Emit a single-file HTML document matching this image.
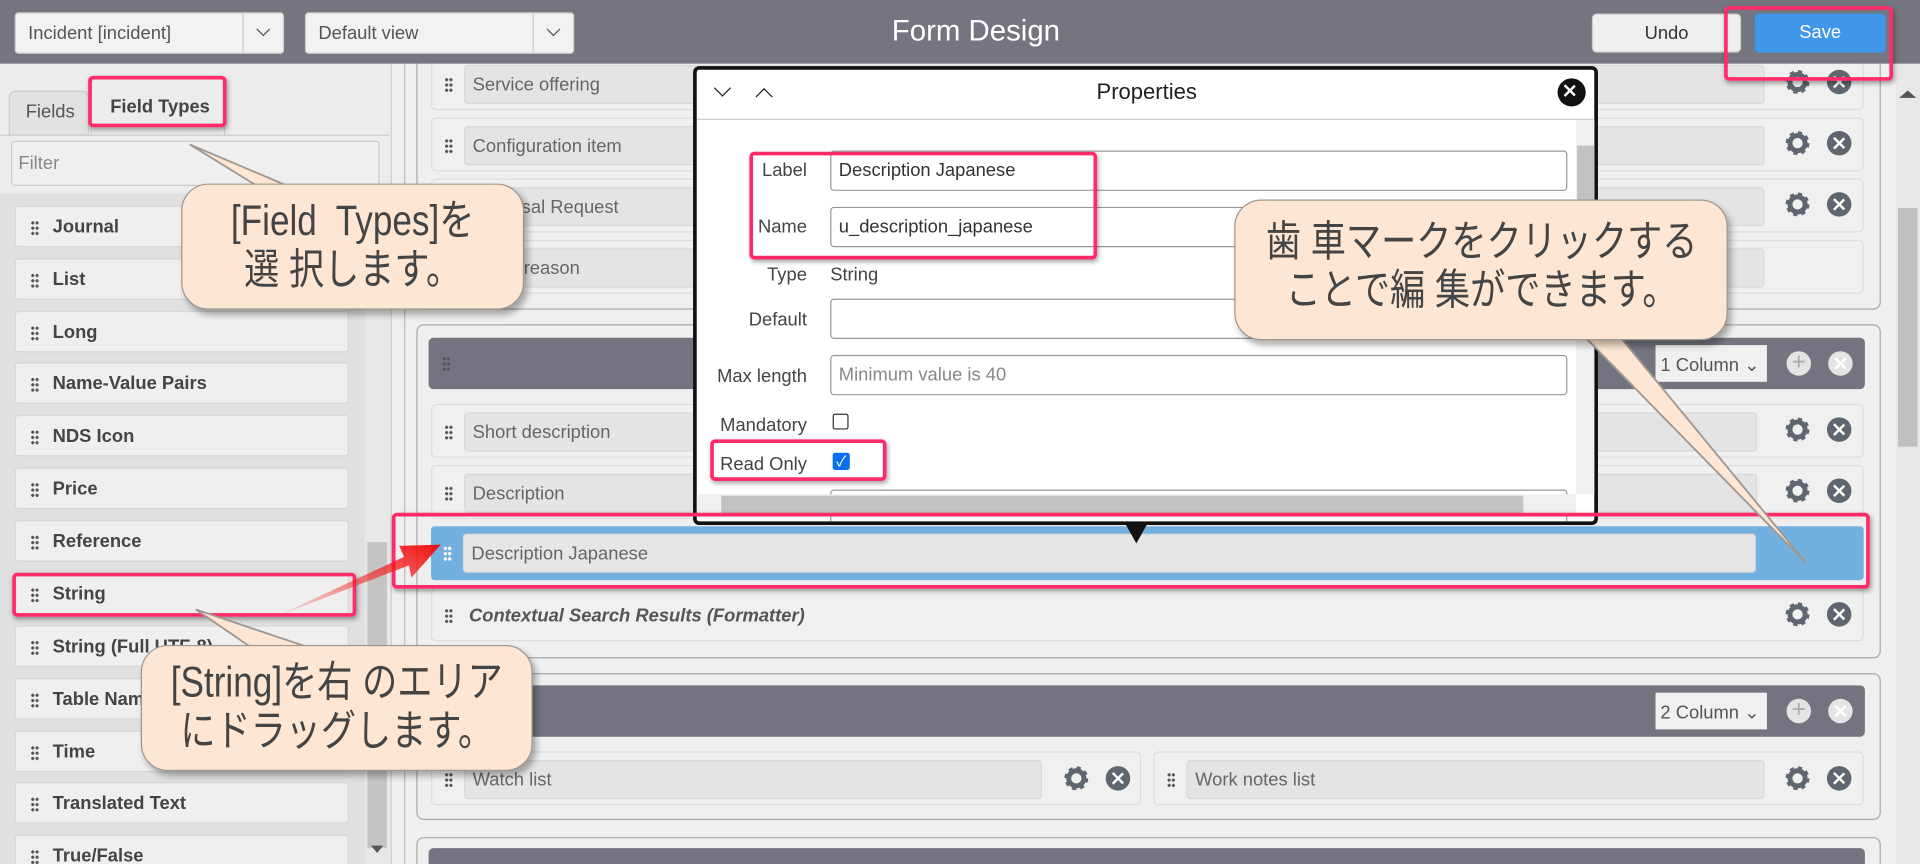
<!DOCTYPE html>
<html><head><meta charset="utf-8"><style>
*{box-sizing:border-box;margin:0;padding:0}
body{width:1920px;height:864px;overflow:hidden;background:#efefef;font-family:"Liberation Sans","Noto Sans CJK JP",sans-serif;color:#333}
#w{position:absolute;left:0;top:0;width:1568px;height:706px;transform:scale(1.22449,1.2238);transform-origin:0 0;overflow:hidden;background:#efefef}
.a{position:absolute}
.hdr{left:0;top:0;width:1568px;height:52px;background:#75757f}
.sel{background:#f2f2f2;border:1px solid #ccc;border-radius:3px;height:34px;font-size:15px;color:#555;padding:8px 10px}
.sel .c{position:absolute;right:0;top:0;width:33px;height:32px;border-left:1px solid #ccc}
.chev{position:absolute;width:8px;height:8px;border-right:1.5px solid #555;border-bottom:1.5px solid #555;transform:rotate(45deg)}
.btn{border-radius:4px;height:32px;font-size:15px;text-align:center;line-height:32px}
.item{left:12px;width:273px;height:34px;background:#efefef;border:1px solid #d6d6d6;border-radius:3px;font-size:15px;font-weight:bold;color:#444;padding:8px 0 0 30px}
.dots{position:absolute;width:7px;height:13px;background:radial-gradient(circle,#555 1.2px,transparent 1.4px) 0 0/3.5px 4.3px}
.row{background:#f0f0f0;border:1px solid #ddd;border-radius:4px;height:44px}
.fld{position:absolute;left:26px;top:6px;height:32px;background:#e4e4e4;border:1px solid #d8d8d8;border-radius:3px;font-size:15px;color:#666;padding:7px 6px}
.sec{border:1px solid #aaa;border-radius:6px;background:#efefef}
.bar{background:#747480;border-radius:4px;height:42px}
.xc{position:absolute;width:20px;height:20px;border-radius:50%;background:#5f6670}
.xc:before,.xc:after{content:"";position:absolute;left:9px;top:4px;width:1.5px;height:12px;background:#fff;transform:rotate(45deg)}
.xc:after{transform:rotate(-45deg)}
.red{position:absolute;border:3px solid #ff2a6a;border-radius:4px;box-shadow:1px 2px 4px rgba(0,0,0,.35)}
.call{position:absolute;background:#fde6d3;border:1.5px solid #a09890;border-radius:22px;box-shadow:3px 4px 5px rgba(0,0,0,.3);font-size:35px;color:#444;text-align:center;line-height:40px;white-space:nowrap}
.call span{position:absolute;left:50%;transform:translateX(-50%) scaleX(0.82);transform-origin:50% 0}
.pl{position:absolute;right:0;width:90px;text-align:right;font-size:15px;color:#444}
.pi{position:absolute;left:109px;width:602px;height:33px;border:1px solid #999;border-radius:3px;font-size:15px;padding:7px 6px;color:#333}
</style></head><body><div id="w">

<div class="a" style="left:0;top:52px;width:320px;height:654px;background:#ececec;border-right:1px solid #ccc"></div>
<div class="a" style="left:0;top:158px;width:298px;height:548px;background:#e0e0e0"></div>
<div class="a" style="left:7px;top:74px;width:66px;height:37px;background:#e2e2e2;border:1px solid #ccc;border-bottom:none;border-radius:6px 6px 0 0;font-size:15px;color:#555;padding:8px 0 0 13px">Fields</div>
<div class="a" style="left:74px;top:63px;width:110px;height:48px;background:#ececec;border:1px solid #ccc;border-bottom:none;border-radius:6px 6px 0 0;font-size:15px;font-weight:bold;color:#444;padding:15px 0 0 15px">Field Types</div>
<div class="a" style="left:0;top:110px;width:318px;height:1px;background:#ccc"></div>
<div class="a" style="left:9px;top:115px;width:301px;height:37px;background:#efefef;border:1px solid #ccc;border-radius:3px;font-size:15px;color:#888;padding:9px 5px">Filter</div>
<div class="a" style="left:298px;top:158px;width:20px;height:548px;background:#e8e8e8"></div>
<div class="a" style="left:300px;top:443px;width:16px;height:250px;background:#c4c4c4"></div>
<div class="a" style="left:303px;top:691px;border:5px solid transparent;border-top:6px solid #555;border-bottom:none"></div>

<div class="a item" style="top:168px"><div class="dots" style="left:12px;top:11px"></div>Journal</div>
<div class="a item" style="top:211px"><div class="dots" style="left:12px;top:11px"></div>List</div>
<div class="a item" style="top:254px"><div class="dots" style="left:12px;top:11px"></div>Long</div>
<div class="a item" style="top:296px"><div class="dots" style="left:12px;top:11px"></div>Name-Value Pairs</div>
<div class="a item" style="top:339px"><div class="dots" style="left:12px;top:11px"></div>NDS Icon</div>
<div class="a item" style="top:382px"><div class="dots" style="left:12px;top:11px"></div>Price</div>
<div class="a item" style="top:425px"><div class="dots" style="left:12px;top:11px"></div>Reference</div>
<div class="a item" style="top:468px"><div class="dots" style="left:12px;top:11px"></div>String</div>
<div class="a item" style="top:511px"><div class="dots" style="left:12px;top:11px"></div>String (Full UTF-8)</div>
<div class="a item" style="top:554px"><div class="dots" style="left:12px;top:11px"></div>Table Name</div>
<div class="a item" style="top:597px"><div class="dots" style="left:12px;top:11px"></div>Time</div>
<div class="a item" style="top:639px"><div class="dots" style="left:12px;top:11px"></div>Translated Text</div>
<div class="a item" style="top:682px"><div class="dots" style="left:12px;top:11px"></div>True/False</div>

<div class="a" style="left:330px;top:52px;width:1px;height:654px;background:#bbb"></div>
<div class="a" style="left:1548px;top:52px;width:20px;height:654px;background:#e8e8e8"></div>
<div class="a" style="left:1550px;top:170px;width:16px;height:195px;background:#c0c0c0"></div>
<div class="a" style="left:1551px;top:74px;border:7px solid transparent;border-bottom:6px solid #555;border-top:none"></div>

<div class="a sec" style="left:340px;top:40px;width:1196px;height:213px"></div>
<div class="a row" style="left:352px;top:46px;width:1170px"><div class="dots" style="left:10px;top:16px"></div><div class="fld" style="width:1062px">Service offering</div></div>
<div class="a row" style="left:352px;top:96px;width:1170px"><div class="dots" style="left:10px;top:16px"></div><div class="fld" style="width:1062px">Configuration item</div></div>
<div class="a row" style="left:352px;top:146px;width:1170px"><div class="dots" style="left:10px;top:16px"></div><div class="fld" style="width:1062px">Proposal Request</div></div>
<div class="a row" style="left:352px;top:196px;width:1170px"><div class="dots" style="left:10px;top:16px"></div><div class="fld" style="width:1062px">Other reason</div></div>

<div class="a sec" style="left:340px;top:265px;width:1196px;height:273px"></div>
<div class="a bar" style="left:350px;top:276px;width:1173px"><div class="dots" style="left:11px;top:15px"></div></div>
<div class="a" style="left:1352px;top:282px;width:91px;height:30px;background:#f0f0f0;font-size:15px;color:#555;padding:7px 4px">1 Column ⌄</div>
<div class="a" style="left:1459px;top:287px;width:20px;height:20px;border-radius:50%;background:#e4e4e4;color:#aaa;text-align:center;font-size:20px;line-height:19px">+</div>
<div class="a xc" style="left:1493px;top:287px;background:#e4e4e4"></div>
<div class="a row" style="left:352px;top:330px;width:1170px"><div class="dots" style="left:10px;top:16px"></div><div class="fld" style="width:1056px">Short description</div></div>
<div class="a row" style="left:352px;top:380px;width:1170px"><div class="dots" style="left:10px;top:16px"></div><div class="fld" style="width:1056px">Description</div></div>
<div class="a" style="left:352px;top:430px;width:1170px;height:44px;background:#72b0e0;border-radius:3px"><div class="dots" style="left:10px;top:16px;background:radial-gradient(circle,#fff 1.3px,transparent 1.5px) 0 0/3.5px 4.3px"></div><div class="fld" style="width:1056px;background:#e6e6e6">Description Japanese</div></div>
<div class="a row" style="left:352px;top:480px;width:1170px"><div class="dots" style="left:10px;top:16px"></div><div style="position:absolute;left:30px;top:14px;font-size:15px;font-weight:bold;font-style:italic;color:#555">Contextual Search Results (Formatter)</div></div>

<div class="a sec" style="left:340px;top:550px;width:1196px;height:120px"></div>
<div class="a bar" style="left:350px;top:560px;width:1173px"></div>
<div class="a" style="left:1352px;top:566px;width:91px;height:30px;background:#f0f0f0;font-size:15px;color:#555;padding:7px 4px">2 Column ⌄</div>
<div class="a" style="left:1459px;top:571px;width:20px;height:20px;border-radius:50%;background:#e4e4e4;color:#aaa;text-align:center;font-size:20px;line-height:19px">+</div>
<div class="a xc" style="left:1493px;top:571px;background:#e4e4e4"></div>
<div class="a row" style="left:352px;top:614px;width:580px"><div class="dots" style="left:10px;top:16px"></div><div class="fld" style="width:472px">Watch list</div></div>
<div class="a row" style="left:942px;top:614px;width:580px"><div class="dots" style="left:10px;top:16px"></div><div class="fld" style="width:472px">Work notes list</div></div>
<div class="a sec" style="left:340px;top:684px;width:1196px;height:40px"></div>
<div class="a bar" style="left:350px;top:693px;width:1173px"></div>

<svg class="a" style="left:0;top:0" width="1568" height="706">
<defs><g id="g"><circle r="6.2" fill="none" stroke="#5f6670" stroke-width="4"/><circle r="8" fill="none" stroke="#5f6670" stroke-width="3.5" stroke-dasharray="3.2 3.08"/></g></defs>
<use href="#g" x="1468" y="67"/><use href="#g" x="1468" y="117"/><use href="#g" x="1468" y="167"/>
<use href="#g" x="1468" y="351"/><use href="#g" x="1468" y="401"/><use href="#g" x="1468" y="502"/>
<use href="#g" x="879" y="636"/><use href="#g" x="1468" y="636"/>
</svg>
<div class="a xc" style="left:1492px;top:57px"></div><div class="a xc" style="left:1492px;top:107px"></div><div class="a xc" style="left:1492px;top:157px"></div>
<div class="a xc" style="left:1492px;top:341px"></div><div class="a xc" style="left:1492px;top:391px"></div><div class="a xc" style="left:1492px;top:492px"></div>
<div class="a xc" style="left:903px;top:626px"></div><div class="a xc" style="left:1492px;top:626px"></div>

<div class="a hdr"></div>
<div class="a sel" style="left:12px;top:10px;width:220px">Incident [incident]<div class="c"><div class="chev" style="left:12px;top:9px"></div></div></div>
<div class="a sel" style="left:249px;top:10px;width:220px">Default view<div class="c"><div class="chev" style="left:12px;top:9px"></div></div></div>
<div class="a" style="left:700px;top:12px;width:194px;text-align:center;color:#fff;font-size:24px">Form Design</div>
<div class="a btn" style="left:1300px;top:11px;width:122px;background:#efefef;color:#333;border:1px solid #ccc">Undo</div>
<div class="a btn" style="left:1433px;top:11px;width:107px;background:#4096e8;color:#fff">Save</div>

<div class="a" style="left:566px;top:54px;width:739px;height:375px;background:#fff;border:3px solid #111;border-radius:5px;overflow:hidden">
 <div class="chev" style="left:16px;top:10px;border-color:#222;width:10px;height:10px"></div>
 <div class="chev" style="left:50px;top:17px;border-color:#222;width:10px;height:10px;transform:rotate(225deg)"></div>
 <div class="a" style="left:0;top:8px;width:735px;text-align:center;font-size:18px;color:#222">Properties</div>
 <div class="a xc" style="left:703px;top:7px;width:23px;height:23px;background:#111"></div>
 <div class="a" style="left:0;top:40px;width:735px;height:1px;background:#ccc"></div>
 <div class="a" style="left:0;top:41px;width:718px;height:306px">
  <div class="pl" style="right:628px;top:33px">Label</div><div class="pi" style="top:25px">Description Japanese</div>
  <div class="pl" style="right:628px;top:79px">Name</div><div class="pi" style="top:71px">u_description_japanese</div>
  <div class="pl" style="right:628px;top:118px">Type</div><div class="a" style="left:109px;top:118px;font-size:15px;color:#444">String</div>
  <div class="pl" style="right:628px;top:155px">Default</div><div class="pi" style="top:146px"></div>
  <div class="pl" style="right:628px;top:201px">Max length</div><div class="pi" style="top:192px;color:#888">Minimum value is 40</div>
  <div class="pl" style="right:628px;top:241px">Mandatory</div><div class="a" style="left:111px;top:240px;width:13px;height:13px;border:1.5px solid #333;border-radius:2px"></div>
  <div class="pl" style="right:628px;top:273px">Read Only</div><div class="a" style="left:111px;top:272px;width:14px;height:14px;background:#0a6ff0;border-radius:2px;color:#fff;font-size:12px;line-height:14px;text-align:center">✓</div>
  <div class="pi" style="top:302px"></div>
 </div>
 <div class="a" style="left:718px;top:41px;width:17px;height:306px;background:#f0f0f0"></div>
 <div class="a" style="left:719px;top:62px;width:15px;height:45px;background:#c2c2c2"></div>
 <div class="a" style="left:0;top:347px;width:718px;height:17px;background:#f0f0f0"></div>
 <div class="a" style="left:20px;top:348px;width:655px;height:15px;background:#c2c2c2"></div>
</div>
<div class="a" style="left:919px;top:428px;border:9px solid transparent;border-top:16px solid #111;border-bottom:none"></div>

<div class="red" style="left:72px;top:62px;width:113px;height:42px"></div>
<div class="red" style="left:1408px;top:5px;width:138px;height:61px"></div>
<div class="red" style="left:612px;top:124px;width:284px;height:88px"></div>
<div class="red" style="left:580px;top:359px;width:144px;height:34px"></div>
<div class="red" style="left:10px;top:468px;width:281px;height:36px"></div>
<div class="red" style="left:320px;top:419px;width:1207px;height:62px"></div>
<svg class="a" style="left:0;top:0" width="1568" height="706">
<defs><linearGradient id="rg" x1="0" y1="1" x2="1" y2="0"><stop offset="0" stop-color="#ff3030" stop-opacity="0.1"/><stop offset="1" stop-color="#f01010"/></linearGradient></defs>
<polygon points="225,504 330,455 326,446 360,445 336,472 334,462" fill="url(#rg)"/>
</svg>

<svg class="a" style="left:0;top:0" width="1568" height="706">
<polygon points="155,118 210,152 235,152" fill="#fde6d3" stroke="#a09890" stroke-width="1.5"/>
<polygon points="1293,274 1475,460 1322,274" fill="#fde6d3" stroke="#a09890" stroke-width="1.5"/>
<polygon points="160,498 205,529 252,529" fill="#fde6d3" stroke="#a09890" stroke-width="1.5"/>
</svg>
<div class="call" style="left:148px;top:150px;width:280px;height:103px"><span style="top:10px">[Field&nbsp; Types]を<br>選 択します。</span></div>
<div class="call" style="left:1008px;top:163px;width:403px;height:115px"><span style="top:14px">歯 車マークをクリックする<br>ことで編 集ができます。</span></div>
<div class="call" style="left:115px;top:527px;width:320px;height:103px"><span style="top:10px">[String]を右 のエリア<br>にドラッグします。</span></div>
</div></body></html>
